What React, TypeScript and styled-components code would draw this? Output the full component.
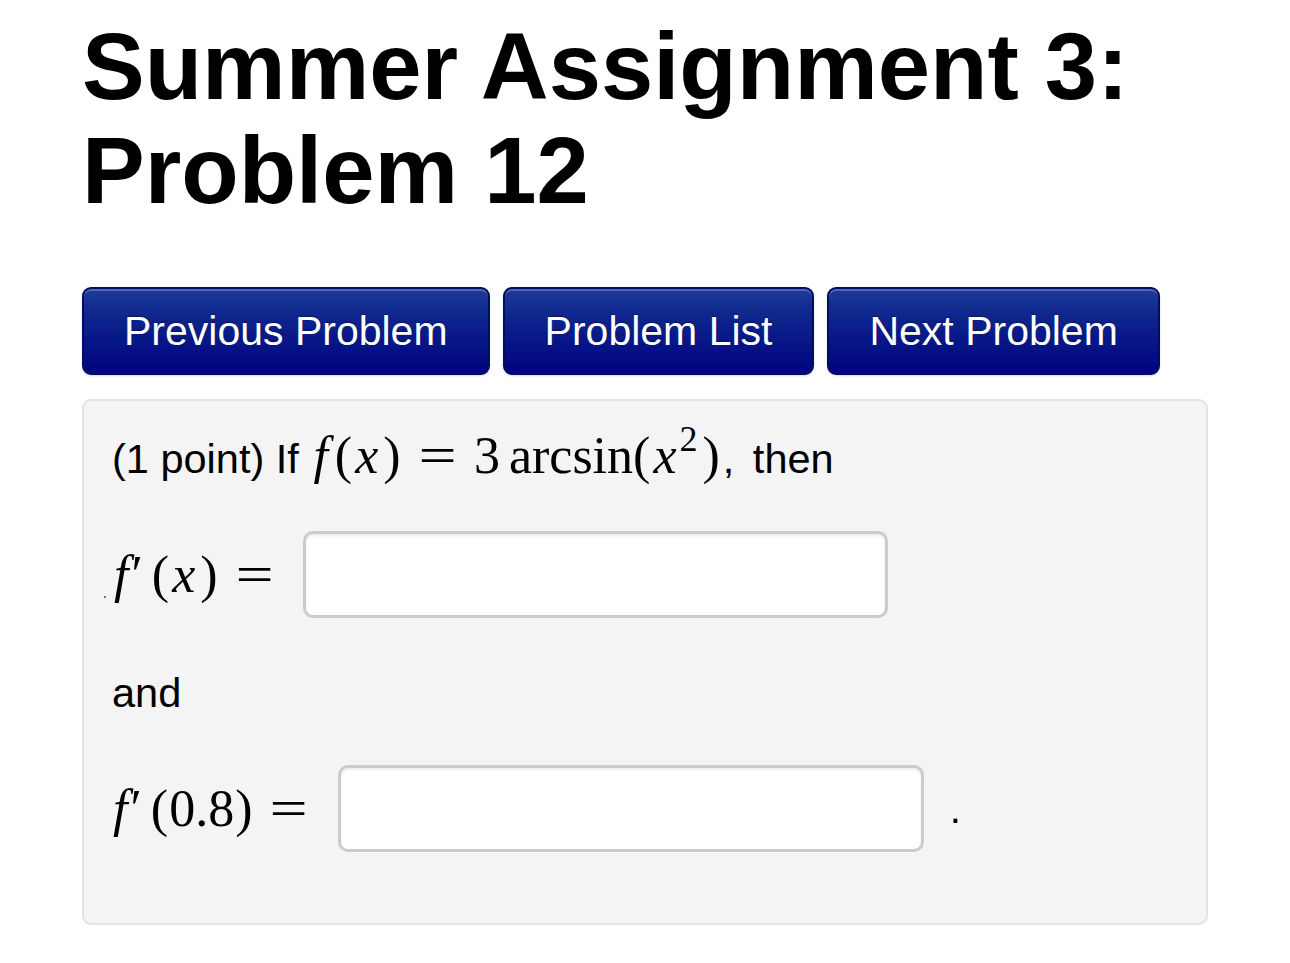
import React from "react";
import styled, { createGlobalStyle } from "styled-components";

const Global = createGlobalStyle`
  html, body { margin: 0; padding: 0; background: #ffffff; }
  body { font-family: "Liberation Sans", Arial, sans-serif; color: #000; }
`;

const Page = styled.div`
  width: 1126px;
  padding: 0 0 0 82px;
`;

const Title = styled.h1`
  margin: 15px 0 0;
  font-size: 94px;
  line-height: 104px;
  font-weight: 700;
`;

const NavBar = styled.nav`
  display: flex;
  gap: 13px;
  margin-top: 64px;
`;

const NavButton = styled.button`
  box-sizing: border-box;
  height: 88px;
  padding: 0 40px;
  border: 2px solid #000c66;
  border-radius: 9px;
  background: linear-gradient(to bottom, #1e3a96 0%, #0d248c 35%, #00037f 100%);
  box-shadow: inset 0 2px 0 rgba(140, 160, 230, 0.45), 0 1px 2px rgba(0, 0, 0, 0.15);
  color: #ffffff;
  font-family: "Liberation Sans", Arial, sans-serif;
  font-size: 41px;
  text-shadow: 0 -1px 1px rgba(0, 0, 0, 0.35);
  cursor: pointer;
  white-space: nowrap;
`;

const Panel = styled.section`
  box-sizing: border-box;
  width: 1126px;
  margin-top: 24px;
  padding: 28px 28px 71px;
  background: #f4f4f4;
  border: 2px solid #e3e3e3;
  border-radius: 9px;
`;

const Para = styled.p<{ $top?: number }>`
  margin: ${(p) => p.$top ?? 0}px 0 0;
  font-size: 41.5px;
  line-height: 60px;
`;

const MathText = styled.span<{ $inline?: boolean }>`
  font-family: "Liberation Serif", "Times New Roman", serif;
  font-size: 52px;
  line-height: 1;
  white-space: nowrap;
  margin: ${(p) => (p.$inline ? "0 3px 0 3px" : "0")};
`;

const Var = styled.i<{ $before?: number; $after?: number }>`
  font-style: italic;
  margin-left: ${(p) => p.$before ?? 0}px;
  margin-right: ${(p) => p.$after ?? 0}px;
`;

const Prime = styled.span`
  font-style: normal;
  margin-right: 9px;
`;

const Rel = styled.span`
  display: inline-block;
  margin: 0 22px;
  transform: scaleX(1.3);
`;

const Num = styled.span`
  margin: 0 1px;
`;

const Thin = styled.span`
  display: inline-block;
  width: 9px;
`;

const Sup = styled.sup`
  font-size: 36px;
  vertical-align: 0;
  position: relative;
  top: -22px;
  line-height: 0;
  margin: 0 5px 0 3px;
`;

const WordGap = styled.span`
  display: inline-block;
  width: 7px;
`;

const AnswerRow = styled.div<{ $top: number }>`
  display: flex;
  align-items: center;
  gap: 12px;
  margin-top: ${(p) => p.$top}px;
`;

const Label = styled.span`
  display: inline-flex;
  align-items: center;
  padding-left: 1px;
`;

const Speck = styled.span`
  display: inline-block;
  width: 2px;
  height: 2px;
  background: #777;
  margin: 0 -5px 0 -8px;
  transform: translateY(22px);
`;

const AnswerInput = styled.input<{ $w: number }>`
  box-sizing: border-box;
  width: ${(p) => p.$w}px;
  height: 87px;
  margin: 0;
  border: 3px solid #cbcbcb;
  border-radius: 10px;
  background: #ffffff;
  box-shadow: inset 0 2px 3px rgba(0, 0, 0, 0.08);
  font-size: 40px;
  padding: 0 12px;
  outline: none;
`;

const Period = styled.span`
  font-size: 40px;
  margin-left: 14px;
  transform: translateY(1px);
`;

export default function App() {
  return (
    <Page>
      <Global />
      <Title>
        Summer Assignment 3:
        <br />
        Problem 12
      </Title>
      <NavBar>
        <NavButton>Previous Problem</NavButton>
        <NavButton>Problem List</NavButton>
        <NavButton>Next Problem</NavButton>
      </NavBar>
      <Panel>
        <Para>
          (1 point) If
          {" "}
          <MathText $inline>
            <Var $after={7}>f</Var>(<Var $before={3} $after={5}>x</Var>)<Rel>=</Rel>3<Thin />arcsin(
            <Var $before={3}>x</Var>
            <Sup>2</Sup>)
          </MathText>
          ,<WordGap /> then
        </Para>
        <AnswerRow $top={42}>
          <Speck />
          <Label>
            <MathText>
              <Var $after={3}>f</Var>
              <Prime>′</Prime>(<Var $before={3} $after={5}>x</Var>)<Rel>=</Rel>
            </MathText>
          </Label>
          <AnswerInput $w={585} type="text" aria-label="f prime of x" />
        </AnswerRow>
        <Para $top={45}>and</Para>
        <AnswerRow $top={42}>
          <Label>
            <MathText>
              <Var $after={3}>f</Var>
              <Prime>′</Prime>(<Num>0.8</Num>)<Rel>=</Rel>
            </MathText>
          </Label>
          <AnswerInput $w={586} type="text" aria-label="f prime of 0.8" />
          <Period>.</Period>
        </AnswerRow>
      </Panel>
    </Page>
  );
}
